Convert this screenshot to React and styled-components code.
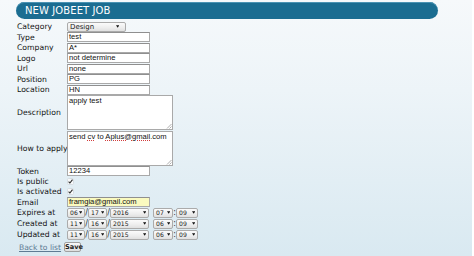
import React from "react";
import styled, { createGlobalStyle } from "styled-components";

const Global = createGlobalStyle`
  html, body { margin: 0; padding: 0; background: #ffffff; }
  body { font-family: "DejaVu Sans", Verdana, sans-serif; }
`;

const Page = styled.div`
  width: 472px;
  height: 256px;
  box-sizing: border-box;
  padding-top: 2px;
  background: linear-gradient(180deg, #f6f9fb 0%, #edf4f8 35%, #d9e9f1 100%);
  color: #1e1e1e;
  overflow: hidden;
`;

const Header = styled.div`
  margin-left: 16px;
  width: 422px;
  height: 17px;
  border-radius: 8.5px;
  background: #1b6d91;
  box-shadow: inset 0 1px 0 #4a93b3;
  display: flex;
  align-items: center;
  padding-left: 9px;
  box-sizing: border-box;
`;

const Title = styled.h1`
  margin: 0;
  font-size: 10px;
  font-weight: normal;
  color: #ffffff;
  letter-spacing: 0.1px;
`;

const Form = styled.div`
  margin-top: 3px;
  padding-left: 17px;
  display: grid;
  grid-template-columns: 50px auto;
  row-gap: 0.55px;
  align-items: center;
  justify-items: start;
`;

const Label = styled.div`
  font-size: 7.7px;
  line-height: 9px;
  color: #141414;
  white-space: nowrap;
`;

const Input = styled.div`
  box-sizing: border-box;
  width: 83px;
  height: 10px;
  border: 1px solid #a9a9a9;
  border-top-color: #8f8f8f;
  background: ${(p) => (p.$autofill ? "#fafabf" : "#ffffff")};
  font-family: "Liberation Sans", Arial, sans-serif;
  font-size: 7.6px;
  line-height: 8px;
  padding-left: 1px;
  color: #111;
  white-space: nowrap;
  overflow: hidden;
`;

const TextArea = styled.div`
  position: relative;
  box-sizing: border-box;
  width: 106px;
  height: 35px;
  border: 1px solid #a9a9a9;
  background: #ffffff;
  font-family: "Liberation Sans", Arial, sans-serif;
  font-size: 7.6px;
  line-height: 9px;
  padding-left: 1px;
  color: #111;
`;

const Misspelled = styled.span`
  text-decoration: underline dotted #d23c3c;
  text-underline-offset: 1px;
`;

const Grip = styled.svg`
  position: absolute;
  right: 0;
  bottom: 0;
`;

const SelectBox = styled.div`
  box-sizing: border-box;
  width: ${(p) => p.$w}px;
  height: 9.5px;
  border: 1px solid #ababab;
  border-radius: 2px;
  background: linear-gradient(180deg, #fbfbfb 0%, #ededed 60%, #e0e0e0 100%);
  display: flex;
  align-items: center;
  justify-content: space-between;
  padding: 0 ${(p) => p.$pr || 2}px 0 2px;
  font-size: ${(p) => p.$fs || 6.1}px;
  line-height: 8px;
  color: #1a1a1a;
`;

const DateRow = styled.div`
  display: flex;
  align-items: center;
  height: 10.5px;
`;

const Sep = styled.span`
  font-size: 8px;
  color: #333;
  width: ${(p) => p.$w}px;
  text-align: center;
  line-height: 8px;
`;

const CheckRow = styled.div`
  height: 9.5px;
  display: flex;
  align-items: center;
`;

const Footer = styled.div`
  margin-top: 2px;
  padding-left: 19px;
  display: flex;
  align-items: center;
  gap: 3px;
`;

const BackLink = styled.a`
  font-size: 7.6px;
  color: #5e7b93;
  text-decoration: underline;
  cursor: pointer;
`;

const SaveButton = styled.button`
  box-sizing: border-box;
  height: 10px;
  width: 17px;
  padding: 0;
  border: 1px solid #a0a0a0;
  border-radius: 2px;
  background: linear-gradient(180deg, #fafafa, #dedede);
  font-family: "DejaVu Sans", Verdana, sans-serif;
  font-size: 6.6px;
  font-weight: bold;
  color: #222;
  line-height: 8px;
`;

const Arrow = () => (
  <svg width="3.4" height="3" viewBox="0 0 4 3">
    <path d="M0 0 L4 0 L2 3 Z" fill="#111" />
  </svg>
);

const Select = ({ w, fs, pr, children }) => (
  <SelectBox $w={w} $fs={fs} $pr={pr}>
    <span>{children}</span>
    <Arrow />
  </SelectBox>
);

const Check = () => (
  <svg width="7" height="7" viewBox="0 0 7 7">
    <rect x="0.5" y="0.5" width="6" height="6" rx="1" fill="#f7f9fa" stroke="#d6dde2" />
    <path d="M1.6 3.6 L2.9 5 L5.5 1.7" fill="none" stroke="#2b2b2b" strokeWidth="1.1" />
  </svg>
);

const DateTime = ({ m, d, y, h, mi }) => (
  <DateRow>
    <Select w={18}>{m}</Select>
    <Sep $w={3}>/</Sep>
    <Select w={19}>{d}</Select>
    <Sep $w={3}>/</Sep>
    <Select w={39}>{y}</Select>
    <Sep $w={4}> </Sep>
    <Select w={20}>{h}</Select>
    <Sep $w={3}>:</Sep>
    <Select w={22}>{mi}</Select>
  </DateRow>
);

const GripIcon = () => (
  <Grip width="6" height="6" viewBox="0 0 6 6">
    <path d="M1 5.5 L5.5 1 M3.5 5.5 L5.5 3.5" stroke="#9a9a9a" strokeWidth="0.8" />
  </Grip>
);

const textRows = [
  ["Type", "test"],
  ["Company", "A*"],
  ["Logo", "not determine"],
  ["Url", "none"],
  ["Position", "PG"],
  ["Location", "HN"],
];

export default function App() {
  return (
    <>
      <Global />
      <Page>
        <Header>
          <Title>NEW JOBEET JOB</Title>
        </Header>
        <Form>
          <Label>Category</Label>
          <Select w={59} fs={7} pr={6}>Design</Select>
          {textRows.map(([l, v]) => (
            <React.Fragment key={l}>
              <Label>{l}</Label>
              <Input>{v}</Input>
            </React.Fragment>
          ))}
          <Label>Description</Label>
          <TextArea>
            apply test
            <GripIcon />
          </TextArea>
          <Label>How to apply</Label>
          <TextArea>
            send <Misspelled>cv</Misspelled> to <Misspelled>Aplus@gmail</Misspelled>.com
            <GripIcon />
          </TextArea>
          <Label>Token</Label>
          <Input>12234</Input>
          <Label>Is public</Label>
          <CheckRow><Check /></CheckRow>
          <Label>Is activated</Label>
          <CheckRow><Check /></CheckRow>
          <Label>Email</Label>
          <Input $autofill>framgia@gmail.com</Input>
          <Label>Expires at</Label>
          <DateTime m="06" d="17" y="2016" h="07" mi="09" />
          <Label>Created at</Label>
          <DateTime m="11" d="16" y="2015" h="06" mi="09" />
          <Label>Updated at</Label>
          <DateTime m="11" d="16" y="2015" h="06" mi="09" />
        </Form>
        <Footer>
          <BackLink>Back to list</BackLink>
          <SaveButton>Save</SaveButton>
        </Footer>
      </Page>
    </>
  );
}
